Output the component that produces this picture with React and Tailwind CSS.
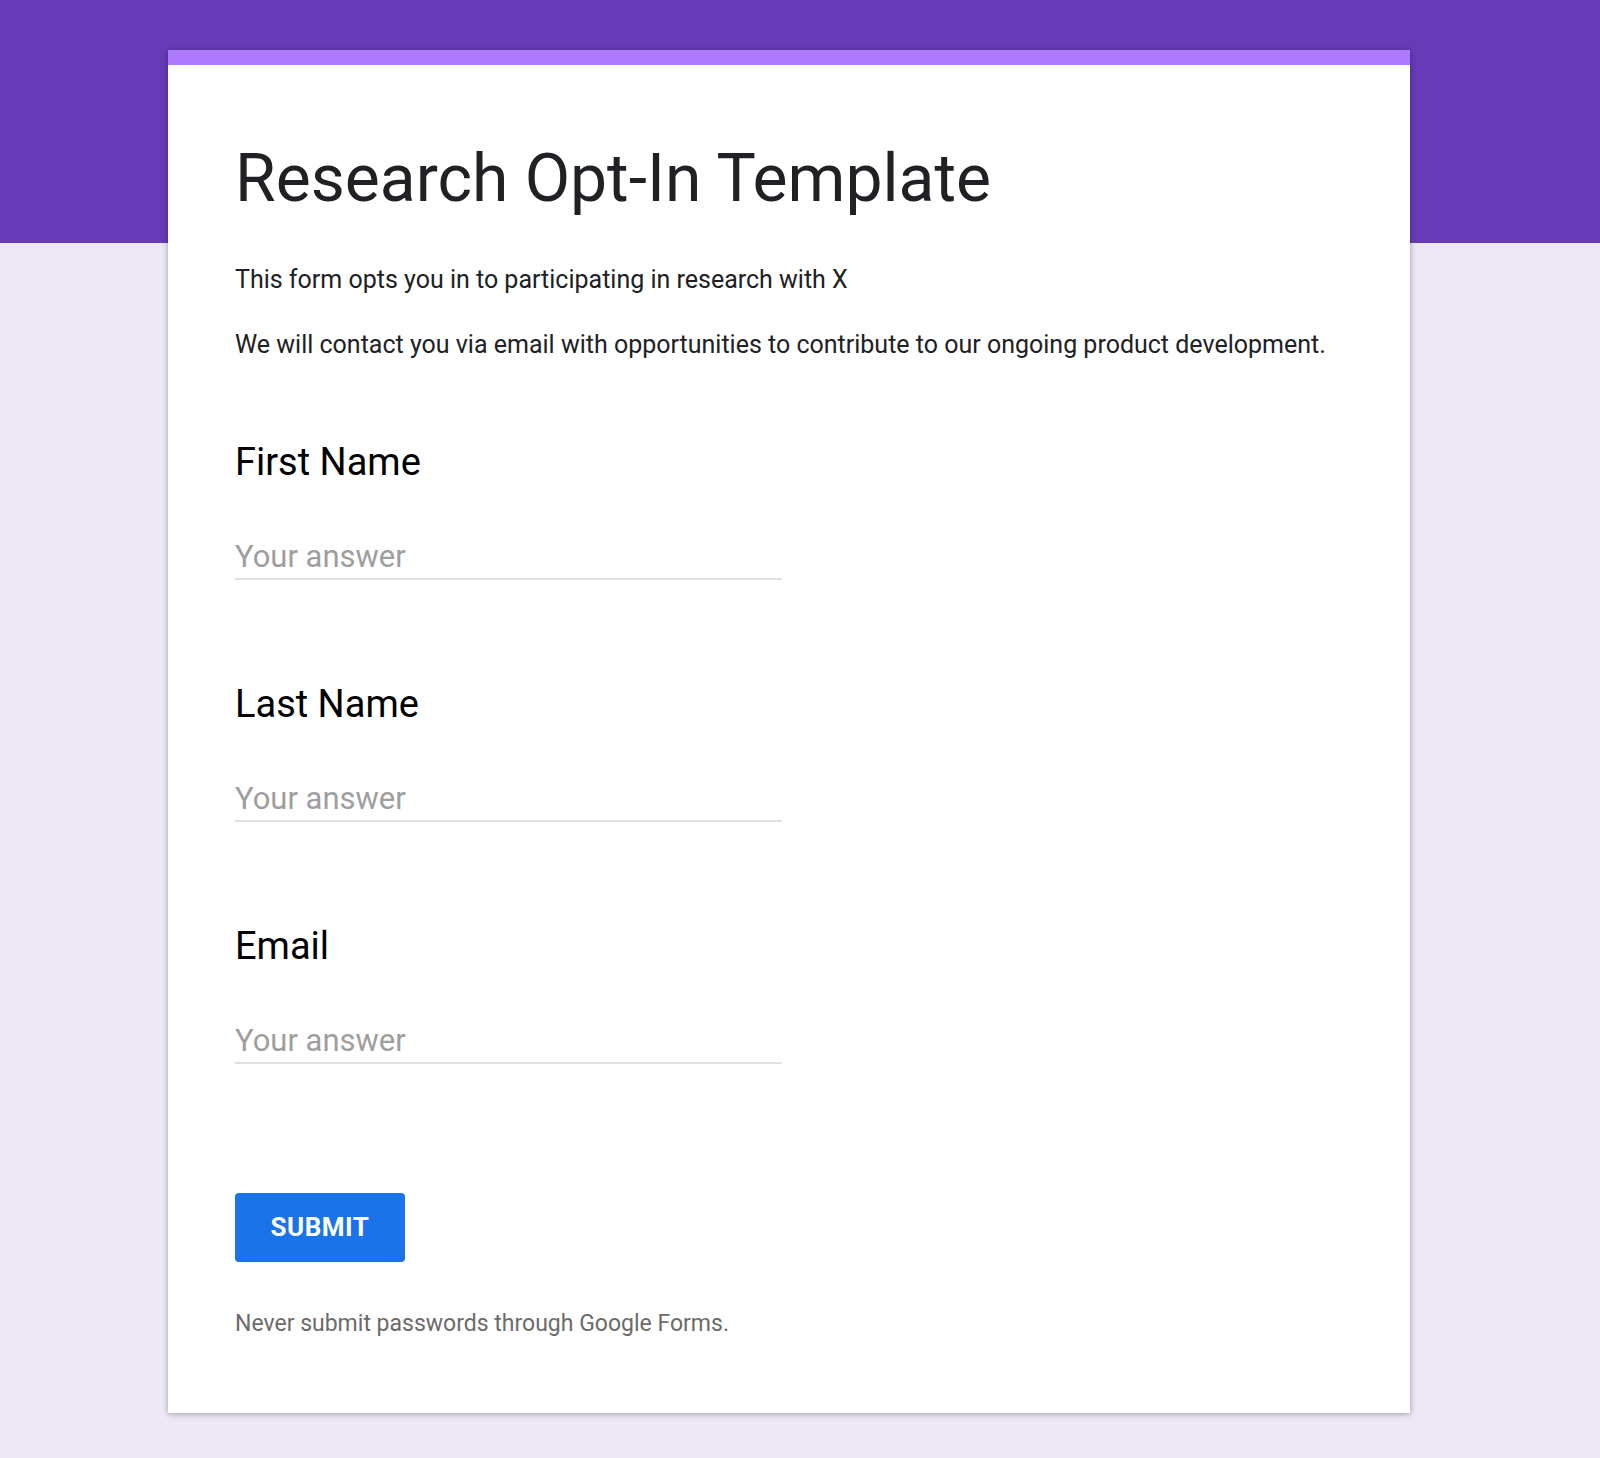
import React from "react";

const questions = ["First Name", "Last Name", "Email"];

export default function App() {
  return (
    <div
      className="min-h-[1458px] w-full bg-[linear-gradient(#673ab7_0,#673ab7_243px,#ede7f6_243px)] pt-[50px] pb-[45px]"
      style={{ fontFamily: "Roboto, 'Noto Sans', Arial, sans-serif" }}
    >
      <div className="ml-[168px] w-[1242px] bg-white shadow-[0_1px_6px_rgba(0,0,0,0.32)]">
        <div className="h-[15px] bg-[#ae7bff]" />

        <div className="pl-[67px] pr-[50px] pt-[75px] pb-[73px]">
          {/* header */}
          <h1 className="text-[66px] leading-[78px] text-[#202124]">
            Research Opt-In Template
          </h1>
          <p className="mt-[45px] text-[25px] leading-[33px] text-[#202124]">
            This form opts you in to participating in research with X
          </p>
          <p className="mt-[32px] text-[25px] leading-[33px] text-[#202124]">
            We will contact you via email with opportunities to contribute to our ongoing product development.
          </p>

          {/* questions */}
          <div className="mt-[77px] flex flex-col gap-[100px]">
            {questions.map((q) => (
              <div key={q}>
                <label className="block text-[38px] leading-[48px] text-black">{q}</label>
                <input
                  type="text"
                  placeholder="Your answer"
                  className="mt-[50px] block h-[44px] w-[547px] border-b-2 border-[#e0e0e0] pb-[2px] text-[31px] leading-[40px] text-[#202124] outline-none placeholder:text-[#9e9e9e]"
                />
              </div>
            ))}
          </div>

          {/* submit */}
          <button className="mt-[129px] flex h-[69px] w-[170px] items-center justify-center rounded-[4px] bg-[#1a73e8] text-[26px] font-bold tracking-[0.5px] text-white">
            SUBMIT
          </button>
          <p className="mt-[46px] text-[23px] leading-[32px] text-[#6b6b6b]">
            Never submit passwords through Google Forms.
          </p>
        </div>
      </div>
    </div>
  );
}
